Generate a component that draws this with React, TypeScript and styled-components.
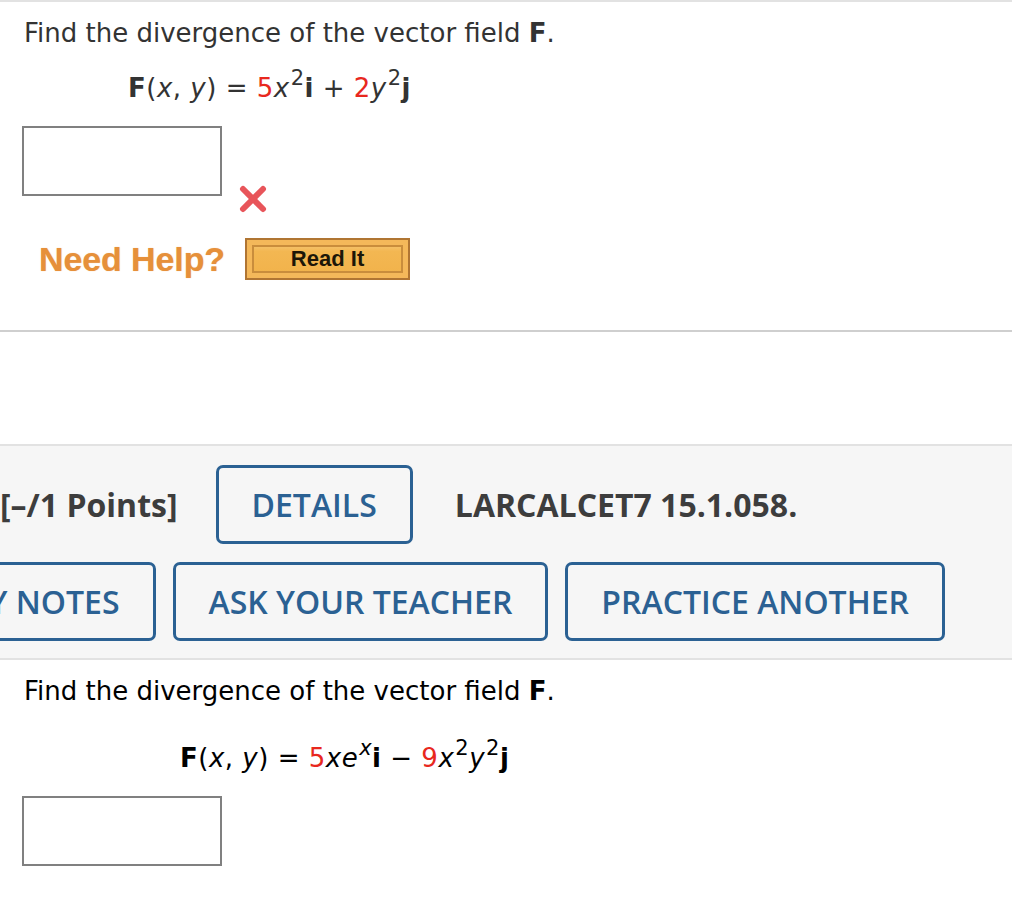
import * as React from 'react';
import styled, { createGlobalStyle } from 'styled-components';

const GlobalStyle = createGlobalStyle`
  html, body {
    margin: 0;
    padding: 0;
    background: #ffffff;
    overflow: hidden;
  }
`;

const Page = styled.div`
  width: 1012px;
  height: 900px;
  overflow: hidden;
  border-top: 2px solid #e2e2e2;
  box-sizing: border-box;
`;

const Question = styled.div<{ $ink: string }>`
  padding: 16px 0 0 24px;
  font-family: 'DejaVu Sans', Verdana, sans-serif;
  font-size: 26px;
  color: ${(p) => p.$ink};
`;

const Prompt = styled.div`
  line-height: 30px;
  height: 30px;
  white-space: nowrap;
`;

const Formula = styled.div<{ $indent: number; $gap: number }>`
  margin-top: ${(p) => p.$gap}px;
  padding-left: ${(p) => p.$indent}px;
  line-height: 30px;
  height: 30px;
  white-space: nowrap;
  letter-spacing: 0.5px;

  b {
    font-weight: bold;
  }
  i {
    font-style: italic;
  }
  sup {
    font-size: 21px;
    line-height: 0;
    vertical-align: 12px;
    margin-left: 1px;
  }
`;

const Red = styled.span`
  color: #e8281e;
`;

const AnswerRow = styled.div<{ $gap: number }>`
  display: flex;
  align-items: flex-end;
  gap: 16px;
  margin-top: ${(p) => p.$gap}px;
  margin-left: -2px;
`;

const AnswerBox = styled.div`
  width: 196px;
  height: 66px;
  border: 2px solid #808080;
  background: #fff;
`;

const WrongMark = styled.svg`
  width: 30px;
  height: 30px;
  margin-bottom: -18px;
`;

const HelpRow = styled.div`
  display: flex;
  align-items: center;
  gap: 20px;
  margin-top: 42px;
  margin-left: 15px;
`;

const HelpLabel = styled.span`
  font-family: 'Liberation Sans', Arial, sans-serif;
  font-weight: bold;
  font-size: 34px;
  letter-spacing: -0.1px;
  color: #e6903a;
  text-shadow: 0 0 1px rgba(230, 144, 58, 0.6);
`;

const ReadItButton = styled.div`
  width: 161px;
  height: 38px;
  box-sizing: content-box;
  border: 2px solid #b07533;
  background: linear-gradient(#f7cf86, #f3b752 30%, #f1b24a);
  display: flex;
  align-items: center;
  justify-content: center;
  font-family: 'Liberation Sans', Arial, sans-serif;
  font-weight: bold;
  font-size: 22px;
  color: #1c1608;
  box-shadow: inset 0 0 0 5px #f4b85a, inset 0 0 0 7px #c98d3c;
`;

const Rule = styled.div`
  height: 2px;
  background: #cfcfcf;
  margin-top: 50px;
`;

const Band = styled.div`
  margin-top: 112px;
  background: #f6f6f6;
  border-top: 2px solid #e2e2e2;
  border-bottom: 2px solid #e2e2e2;
  padding: 19px 0 17px;
  font-family: 'Open Sans', sans-serif;
`;

const BandRow = styled.div<{ $shift: number }>`
  display: flex;
  align-items: center;
  margin-left: ${(p) => p.$shift}px;
  white-space: nowrap;
`;

const Points = styled.span`
  font-weight: 700;
  font-size: 32px;
  color: #3d3d3d;
  margin-right: 38px;
`;

const ActionButton = styled.div`
  box-sizing: border-box;
  height: 79px;
  padding: 0 33px;
  border: 3px solid #2b6193;
  border-radius: 7px;
  display: flex;
  align-items: center;
  font-weight: 600;
  font-size: 32px;
  color: #2b6193;
`;

const ButtonGroup = styled.div`
  display: flex;
  gap: 17px;
  margin-top: 18px;
`;

const SourceLabel = styled.span`
  font-weight: 700;
  font-size: 32px;
  color: #3d3d3d;
  margin-left: 42px;
`;

export default function App() {
  return (
    <Page>
      <GlobalStyle />
      <Question $ink="#333333">
        <Prompt>
          Find the divergence of the vector field <b>F</b>.
        </Prompt>
        <Formula $indent={104} $gap={25}>
          <b>F</b>(<i>x</i>, <i>y</i>) = <Red>5</Red>
          <i>x</i>
          <sup>2</sup>
          <b>i</b> + <Red>2</Red>
          <i>y</i>
          <sup>2</sup>
          <b>j</b>
        </Formula>
        <AnswerRow $gap={23}>
          <AnswerBox />
          <WrongMark viewBox="0 0 30 30">
            <defs>
              <filter id="soft" x="-20%" y="-20%" width="140%" height="140%">
                <feGaussianBlur stdDeviation="0.7" />
              </filter>
            </defs>
            <g filter="url(#soft)" stroke="#e8545a" strokeWidth="6" strokeLinecap="round">
              <line x1="5" y1="5" x2="25" y2="25" />
              <line x1="25" y1="5" x2="5" y2="25" />
            </g>
          </WrongMark>
        </AnswerRow>
        <HelpRow>
          <HelpLabel>Need Help?</HelpLabel>
          <ReadItButton>Read It</ReadItButton>
        </HelpRow>
      </Question>
      <Rule />
      <Band>
        <BandRow $shift={0}>
          <Points>[–/1 Points]</Points>
          <ActionButton>DETAILS</ActionButton>
          <SourceLabel>LARCALCET7 15.1.058.</SourceLabel>
        </BandRow>
        <BandRow $shift={-77}>
          <ButtonGroup>
            <ActionButton>MY NOTES</ActionButton>
            <ActionButton>ASK YOUR TEACHER</ActionButton>
            <ActionButton>PRACTICE ANOTHER</ActionButton>
          </ButtonGroup>
        </BandRow>
      </Band>
      <Question $ink="#000000">
        <Prompt>
          Find the divergence of the vector field <b>F</b>.
        </Prompt>
        <Formula $indent={156} $gap={37}>
          <b>F</b>(<i>x</i>, <i>y</i>) = <Red>5</Red>
          <i>xe</i>
          <sup>
            <i>x</i>
          </sup>
          <b>i</b> − <Red>9</Red>
          <i>x</i>
          <sup>2</sup>
          <i>y</i>
          <sup>2</sup>
          <b>j</b>
        </Formula>
        <AnswerRow $gap={23}>
          <AnswerBox />
        </AnswerRow>
      </Question>
    </Page>
  );
}
